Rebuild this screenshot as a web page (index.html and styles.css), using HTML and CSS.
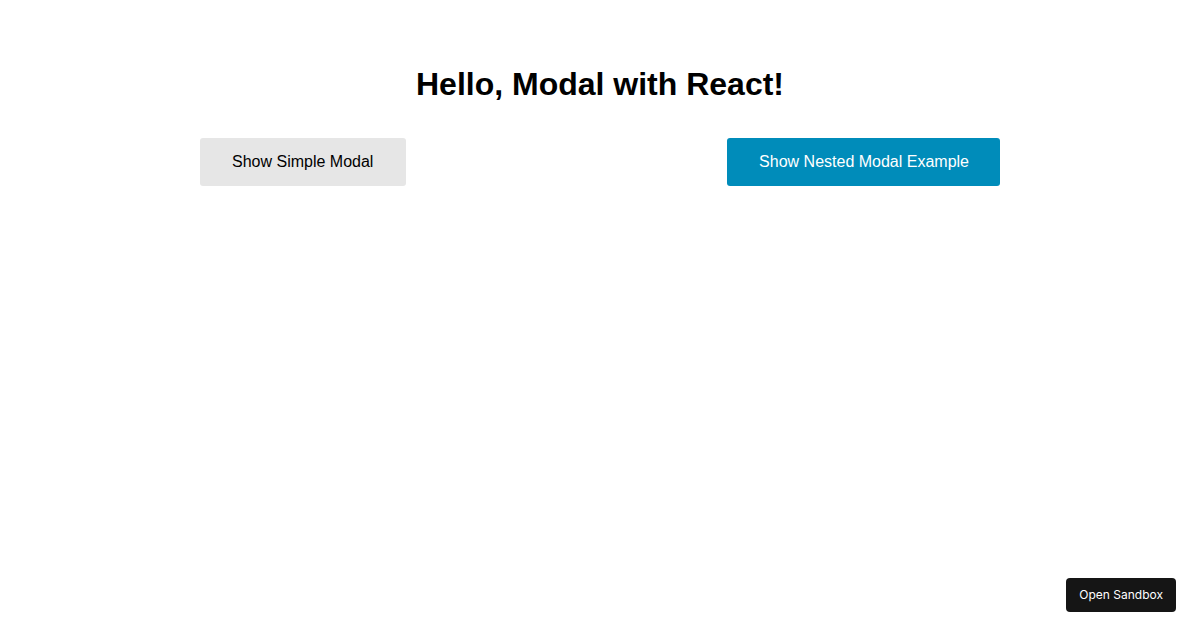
FILE: index.html
```html
<!DOCTYPE html>
<html>
<head>
<meta charset="utf-8">
<link rel="stylesheet" href="styles.css">
</head>
<body>
<main class="app">
  <h1 class="title">Hello, Modal with React!</h1>
  <div class="actions">
    <button class="btn btn-secondary">Show Simple Modal</button>
    <button class="btn btn-primary">Show Nested Modal Example</button>
  </div>
</main>
<a class="sandbox-link">Open Sandbox</a>
</body>
</html>
```
FILE: styles.css
```css
html, body {
  margin: 0;
  padding: 0;
  background: #ffffff;
}
body {
  font-family: "Liberation Sans", Arial, sans-serif;
  color: #000;
  width: 1200px;
  height: 630px;
  position: relative;
  overflow: hidden;
}
.app {
  width: 800px;
  margin: 0 auto;
  padding-top: 64px;
}
.title {
  margin: 0;
  font-size: 32px;
  font-weight: bold;
  line-height: 40px;
  text-align: center;
}
.actions {
  display: flex;
  justify-content: space-between;
  margin-top: 34px;
}
.btn {
  font-family: "Liberation Sans", Arial, sans-serif;
  font-size: 16px;
  line-height: 18px;
  padding: 15px 32px;
  border: none;
  border-radius: 3px;
  cursor: pointer;
}
.btn-secondary {
  background: #e6e6e6;
  color: #000;
  padding-right: 33px;
}
.btn-primary {
  background: #008cba;
  color: #fff;
  padding-left: 32px;
  padding-right: 31px;
}
.sandbox-link {
  position: absolute;
  right: 24px;
  bottom: 18px;
  background: #151515;
  color: #fff;
  font-family: Inter, "Liberation Sans", sans-serif;
  font-size: 12px;
  line-height: 16px;
  padding: 9px 13px;
  border-radius: 4px;
}
```
